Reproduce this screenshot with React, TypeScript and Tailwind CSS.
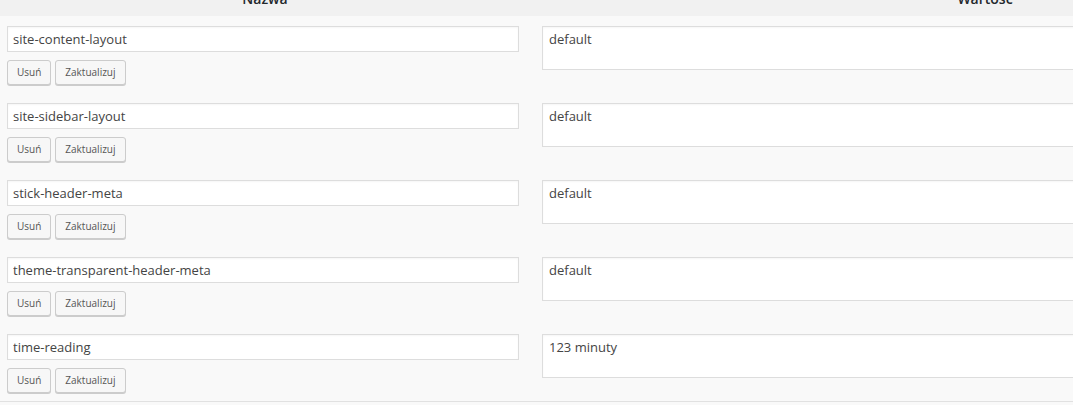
const rows = [
  { name: "site-content-layout", value: "default" },
  { name: "site-sidebar-layout", value: "default" },
  { name: "stick-header-meta", value: "default" },
  { name: "theme-transparent-header-meta", value: "default" },
  { name: "time-reading", value: "123 minuty" },
];

function SmallButton({ label }: { label: string }) {
  return (
    <button
      type="button"
      className="h-[25px] rounded-[3px] border border-[#cccccc] bg-[#f7f7f7] px-[9px] text-[10px] leading-[23px] text-[#555555] shadow-[0_1px_0_#cccccc]"
    >
      {label}
    </button>
  );
}

export default function App() {
  return (
    <div
      className="h-[405px] w-[1073px] overflow-hidden bg-[#f9f9f9] text-[#444444]"
      style={{ fontFamily: '"Open Sans", "Noto Sans", sans-serif' }}
    >
      <div className="w-[1440px]">
        {/* table header, scrolled so only the lower half shows */}
        <div className="flex h-[16px] overflow-hidden bg-[#f1f1f1] text-[14px] font-semibold text-[#23282d]">
          <div className="-mt-[12px] w-[530px] text-center">Nazwa</div>
          <div className="-mt-[12px] flex-1 text-center">Wartość</div>
        </div>
        <div className="border-b border-[#e1e1e1]">
          {rows.map((r) => (
            <div key={r.name} className="flex h-[77px] pt-[10px]">
              <div className="w-[530px] pl-[7px]">
                <input
                  readOnly
                  value={r.name}
                  className="h-[26px] w-[512px] border border-[#dddddd] bg-white px-[5px] text-[13px] text-[#444444] shadow-[inset_0_1px_2px_rgba(0,0,0,0.04)] outline-none"
                />
                <div className="mt-[8px] flex gap-[4px]">
                  <SmallButton label="Usuń" />
                  <SmallButton label="Zaktualizuj" />
                </div>
              </div>
              <div className="flex-1 pl-[12px]">
                <textarea
                  readOnly
                  value={r.value}
                  className="block h-[44px] w-[880px] resize-none border border-[#dddddd] bg-white px-[6px] py-[3px] text-[13px] leading-[18px] text-[#444444] shadow-[inset_0_1px_2px_rgba(0,0,0,0.04)] outline-none"
                />
              </div>
            </div>
          ))}
        </div>
      </div>
    </div>
  );
}
